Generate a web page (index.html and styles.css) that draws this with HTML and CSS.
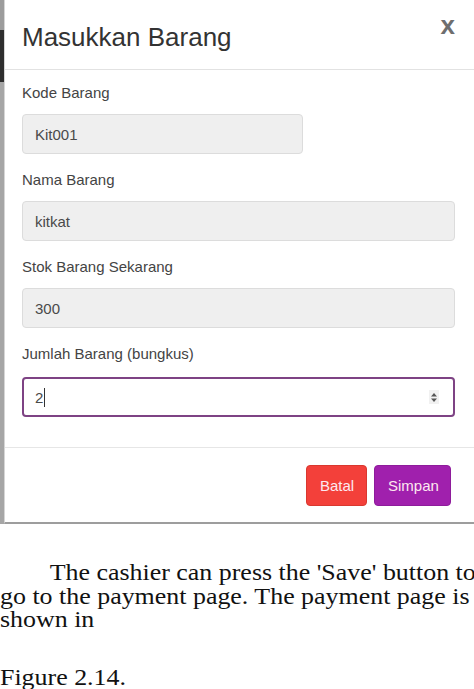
FILE: index.html
```html
<!DOCTYPE html>
<html lang="id">
<head>
<meta charset="utf-8">
<title>Masukkan Barang</title>
<link rel="stylesheet" href="styles.css">
</head>
<body>
<div class="stage">
  <div class="backdrop"><div class="bd-top"></div><div class="bd-dark"></div><div class="bd-rest"></div></div>
  <div class="modal">
    <div class="modal-header">
      <h1 class="modal-title">Masukkan Barang</h1>
      <span class="close">x</span>
    </div>
    <div class="modal-body">
      <div class="group">
        <div class="label">Kode Barang</div>
        <div class="field readonly short">Kit001</div>
      </div>
      <div class="group">
        <div class="label">Nama Barang</div>
        <div class="field readonly">kitkat</div>
      </div>
      <div class="group">
        <div class="label">Stok Barang Sekarang</div>
        <div class="field readonly">300</div>
      </div>
      <div class="group">
        <div class="label">Jumlah Barang (bungkus)</div>
        <div class="field focus">
          <span class="value">2</span><span class="caret"></span>
          <span class="spacer"></span>
          <span class="spinner">
            <svg width="8" height="11" viewBox="0 0 8 11"><path d="M4 1 L7 4.5 H1 Z" fill="#555"/><path d="M4 10 L7 6.5 H1 Z" fill="#555"/></svg>
          </span>
        </div>
      </div>
    </div>
    <div class="modal-footer">
      <button class="btn btn-red">Batal</button>
      <button class="btn btn-purple">Simpan</button>
    </div>
  </div>
</div>
<div class="text">
  <div class="line indent">The cashier can press the 'Save' button to</div>
  <div class="line">go to the payment page. The payment page is</div>
  <div class="line">shown in</div>
  <div class="line figure">Figure 2.14.</div>
</div>
</body>
</html>
```
FILE: styles.css
```css
html, body {
  margin: 0;
  padding: 0;
  background: #fff;
  overflow: hidden;
}
body {
  width: 474px;
  height: 689px;
}
.stage {
  display: flex;
  height: 524px;
}
.backdrop {
  width: 4px;
  display: flex;
  flex-direction: column;
}
.bd-top { height: 30px; background: #9c9c9c; }
.bd-dark { height: 52px; background: #2e2e2e; }
.bd-rest { flex: 1; background: #a6a6a6; }
.modal {
  flex: 1;
  background: #fff;
  border-left: 1px solid #d6d6d6;
  border-bottom: 2px solid #9d9d9d;
  font-family: "Liberation Sans", Arial, sans-serif;
  display: flex;
  flex-direction: column;
}
.modal-header {
  height: 69px;
  border-bottom: 1px solid #e2e2e2;
  display: flex;
  align-items: flex-start;
  justify-content: space-between;
  padding: 0 19px 0 17px;
}
.modal-title {
  margin: 0;
  padding-top: 20px;
  font-size: 26px;
  font-weight: normal;
  color: #333;
  line-height: 34px;
}
.close {
  font-size: 26px;
  font-weight: bold;
  color: #6e6e6e;
  line-height: 26px;
  padding-top: 12px;
}
.modal-body {
  padding: 13px 19px 0 17px;
  border-bottom: 1px solid #e6e6e6;
}
.group {
  margin-bottom: 16px;
}
.group:last-child {
  margin-bottom: 30px;
}
.label {
  font-size: 15px;
  line-height: 20px;
  color: #444;
  margin-bottom: 11px;
}
.group:last-child .label {
  margin-bottom: 13px;
}
.field {
  height: 40px;
  box-sizing: border-box;
  border: 1px solid #dcdcdc;
  border-radius: 4px;
  padding: 0 12px;
  display: flex;
  align-items: center;
  font-size: 15px;
  color: #4a4a4a;
}
.readonly {
  background: #efefef;
}
.short {
  width: 281px;
}
.focus {
  background: #fff;
  border: 2px solid #7e4384;
  padding: 0 12px 0 11px;
}
.caret {
  width: 1px;
  height: 19px;
  background: #333;
  margin-left: 1px;
}
.spacer { flex: 1; }
.spinner {
  width: 10px;
  height: 14px;
  background: #f1f1f1;
  display: flex;
  align-items: center;
  justify-content: center;
  margin-right: 2px;
}
.modal-footer {
  flex: 1;
  display: flex;
  justify-content: flex-end;
  align-items: flex-start;
  gap: 7px;
  padding: 17px 23px 0 0;
}
.btn {
  height: 41px;
  border-radius: 4px;
  font-family: "Liberation Sans", Arial, sans-serif;
  font-size: 15px;
  color: #fde8ef;
  padding: 0 13px;
  cursor: pointer;
}
.btn-red {
  width: 61px;
  background: #f3403a;
  border: 1px solid #d9382f;
}
.btn-purple {
  width: 77px;
  background: #a020ad;
  border: 1px solid #8e1c9b;
}
.text {
  font-family: "Liberation Serif", "Times New Roman", serif;
  font-size: 24px;
  line-height: 23.5px;
  color: #111;
  padding-top: 37px;
  transform: scaleX(1.08);
  transform-origin: left top;
}
.line {
  white-space: nowrap;
}
.indent {
  padding-left: 46px;
}
.figure {
  margin-top: 34px;
}
```
